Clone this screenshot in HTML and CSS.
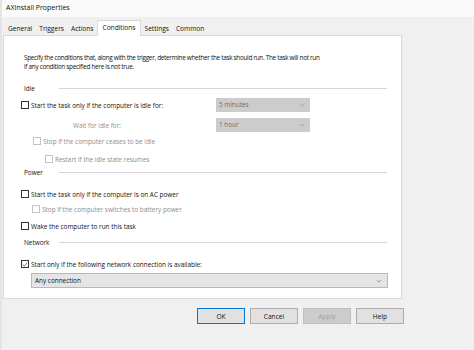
FILE: index.html
```html
<!DOCTYPE html>
<html lang="en">
  <head>
    <meta charset="UTF-8" />
    <title>AXInstall Properties</title>
    <link rel="stylesheet" href="styles.css">
  </head>
  <body>
    <div class="window">
      <div class="titlebar">AXInstall Properties</div>

      <div class="tabs">
        <div class="tab">General</div>
        <div class="tab">Triggers</div>
        <div class="tab">Actions</div>
        <div class="tab active">Conditions</div>
        <div class="tab">Settings</div>
        <div class="tab">Common</div>
      </div>

      <div class="panel">
        <p class="desc">
          Specify the conditions that, along with the trigger, determine whether the task should run. The task will not run<br>
          if any condition specified here is not true.
        </p>

        <div class="group-head row-idle-head"><span>Idle</span><span class="rule"></span></div>

        <div class="row drop-row row-idle">
          <label class="check"><span class="box"></span>Start the task only if the computer is idle for:</label>
          <div class="select disabled">5 minutes
            <svg class="arrow" viewBox="0 0 8 5" width="6" height="4"><path d="M1 1 L4 4 L7 1" fill="none" stroke="#9a9a9a" stroke-width="1"/></svg>
          </div>
        </div>

        <div class="row drop-row row-wait">
          <span class="wait-label">Wait for idle for:</span>
          <div class="select disabled">1 hour
            <svg class="arrow" viewBox="0 0 8 5" width="6" height="4"><path d="M1 1 L4 4 L7 1" fill="none" stroke="#9a9a9a" stroke-width="1"/></svg>
          </div>
        </div>

        <div class="row row-stop indent-1">
          <label class="check off"><span class="box"></span>Stop if the computer ceases to be idle</label>
        </div>

        <div class="row row-restart indent-2">
          <label class="check off"><span class="box"></span>Restart if the idle state resumes</label>
        </div>

        <div class="group-head row-power-head"><span>Power</span><span class="rule"></span></div>

        <div class="row row-ac">
          <label class="check"><span class="box"></span>Start the task only if the computer is on AC power</label>
        </div>

        <div class="row row-battery indent-b">
          <label class="check off"><span class="box"></span>Stop if the computer switches to battery power</label>
        </div>

        <div class="row row-wake">
          <label class="check"><span class="box"></span>Wake the computer to run this task</label>
        </div>

        <div class="group-head row-net-head"><span>Network</span><span class="rule"></span></div>

        <div class="row row-net">
          <label class="check"><span class="box checked">
            <svg viewBox="0 0 9 9" width="7" height="7"><path d="M1 4.5 L3.5 7 L8 1.5" fill="none" stroke="#333" stroke-width="1"/></svg>
          </span>Start only if the following network connection is available:</label>
        </div>

        <div class="select wide">Any connection
          <svg class="arrow" viewBox="0 0 8 5" width="6" height="4"><path d="M1 1 L4 4 L7 1" fill="none" stroke="#777" stroke-width="1"/></svg>
        </div>
      </div>

      <div class="buttons">
        <button class="btn default">OK</button>
        <button class="btn">Cancel</button>
        <button class="btn" disabled>Apply</button>
        <button class="btn">Help</button>
      </div>
    </div>
  </body>
</html>
```

FILE: styles.css
```css
body {
  margin: 0;
  background-color: #f0f0f0;
  font-family: "Open Sans", "Noto Sans", sans-serif;
  font-size: 6.4px;
  color: #111;
}
.window {
  width: 474px;
  height: 350px;
  overflow: hidden;
  border-left: 2px solid #e4e4e4;
  box-sizing: border-box;
}
.titlebar {
  height: 17px;
  line-height: 15px;
  padding-left: 4px;
  font-size: 7px;
  background-color: #fafafa;
}
.tabs {
  display: flex;
  align-items: flex-end;
  height: 18px;
  padding-left: 3px;
}
.tab {
  height: 12px;
  line-height: 12px;
  padding: 0 3px;
  margin-right: 1px;
  font-size: 6.6px;
}
.tab.active {
  height: 15px;
  line-height: 13px;
  padding: 0 4px;
  background-color: #fff;
  border: 1px solid #d9d9d9;
  border-bottom: none;
  position: relative;
  top: 1px;
}
.panel {
  margin-left: 1px;
  width: 399px;
  height: 264px;
  box-sizing: border-box;
  background-color: #fff;
  border: 1px solid #d9d9d9;
  padding: 17px 0 0 17px;
}
.desc {
  margin: 0;
  line-height: 9px;
  padding-left: 3px;
  letter-spacing: -0.3px;
}
.group-head {
  display: flex;
  align-items: center;
  height: 12px;
  padding-left: 3px;
}
.group-head .rule {
  flex: none;
  width: 328px;
  height: 1px;
  background-color: #d5d5d5;
  margin-left: auto;
  margin-right: 14px;
}
.row {
  display: flex;
  align-items: center;
  height: 12px;
}
.drop-row {
  height: 14px;
}
.check {
  display: flex;
  align-items: center;
}
.box {
  width: 8px;
  height: 8px;
  box-sizing: border-box;
  border: 1px solid #333;
  background-color: #fff;
  margin-right: 2px;
  display: flex;
  align-items: center;
  justify-content: center;
}
.check.off {
  color: #8d8d8d;
}
.check.off .box {
  border-color: #c4c4c4;
}
.row-idle .check {
  width: 195px;
}
.wait-label {
  width: 143px;
  padding-left: 52px;
  color: #8d8d8d;
}
.select {
  width: 94px;
  height: 14px;
  line-height: 14px;
  box-sizing: border-box;
  padding-left: 3px;
  position: relative;
}
.select.disabled {
  background-color: #cccccc;
  color: #6d6d6d;
}
.select .arrow {
  position: absolute;
  right: 5px;
  top: 5px;
}
.select.wide {
  width: 357px;
  height: 15px;
  line-height: 13px;
  margin: 3px 0 0 10px;
  background-color: #e5e5e5;
  border: 1px solid #b9b9b9;
  color: #111;
}
.indent-1 {
  padding-left: 12px;
}
.indent-2 {
  padding-left: 24px;
}
.indent-b {
  padding-left: 11px;
}
.row-idle-head {
  margin-top: 11px;
}
.row-idle {
  margin-top: 4px;
}
.row-wait {
  margin-top: 6px;
}
.row-stop {
  margin-top: 3px;
}
.row-restart {
  margin-top: 6px;
}
.row-power-head {
  margin-top: 1px;
}
.row-ac {
  margin-top: 10px;
}
.row-battery {
  margin-top: 3px;
}
.row-wake {
  margin-top: 5px;
}
.row-net-head {
  margin-top: 4px;
}
.row-net {
  margin-top: 10px;
}
.buttons {
  display: flex;
  gap: 5px;
  padding-left: 195px;
  margin-top: 9px;
}
.btn {
  width: 48px;
  height: 16px;
  padding: 0;
  font-family: "Open Sans", "Noto Sans", sans-serif;
  font-size: 6.6px;
  color: #111;
  background-color: #e1e1e1;
  border: 1px solid #adadad;
}
.btn.default {
  border-color: #0078d7;
}
.btn:disabled {
  background-color: #cccccc;
  border-color: #bfbfbf;
  color: #a0a0a0;
}
```
